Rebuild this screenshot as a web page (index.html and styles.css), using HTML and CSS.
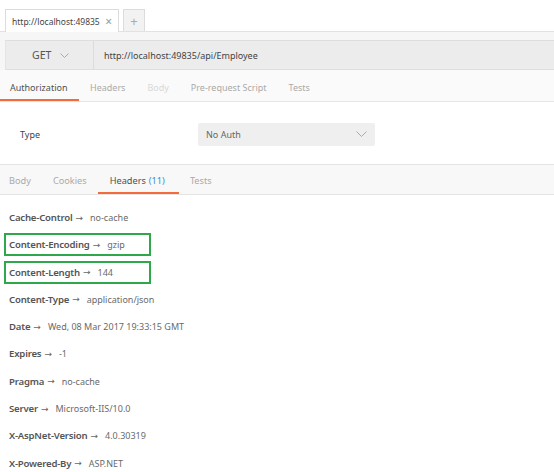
FILE: index.html
```html
<!DOCTYPE html>
<html>
<head>
<meta charset="utf-8">
<link rel="stylesheet" href="styles.css">
</head>
<body>
<div class="tabbar">
  <div class="tab"><span class="tab-title">http://localhost:49835</span><span class="tab-close">×</span></div>
  <div class="tab-plus">+</div>
</div>
<div class="reqwrap">
  <div class="req">
    <div class="method">GET <svg class="chev" width="9" height="5" viewBox="0 0 9 5"><path d="M0.5 0.5 L4.5 4.5 L8.5 0.5" fill="none" stroke="#aaa" stroke-width="1"/></svg></div>
    <div class="url">http://localhost:49835/api/Employee</div>
  </div>
</div>
<div class="reqtabs">
  <div class="rt active">Authorization</div>
  <div class="rt">Headers</div>
  <div class="rt faint">Body</div>
  <div class="rt">Pre-request Script</div>
  <div class="rt">Tests</div>
</div>
<div class="auth">
  <div class="type-label">Type</div>
  <div class="select">No Auth <svg class="chev" width="11" height="6" viewBox="0 0 11 6"><path d="M0.5 0.5 L5.5 5.5 L10.5 0.5" fill="none" stroke="#aaa" stroke-width="1"/></svg></div>
</div>
<div class="restabs">
  <div class="rs">Body</div>
  <div class="rs">Cookies</div>
  <div class="rs active">Headers <span class="count">(11)</span></div>
  <div class="rs">Tests</div>
</div>
<div class="headers">
  <div class="hrow"><b>Cache-Control</b><i>→</i><span>no-cache</span></div>
  <div class="hrow boxed"><b>Content-Encoding</b><i>→</i><span>gzip</span></div>
  <div class="hrow boxed"><b>Content-Length</b><i>→</i><span>144</span></div>
  <div class="hrow"><b>Content-Type</b><i>→</i><span>application/json</span></div>
  <div class="hrow"><b>Date</b><i>→</i><span>Wed, 08 Mar 2017 19:33:15 GMT</span></div>
  <div class="hrow"><b>Expires</b><i>→</i><span>-1</span></div>
  <div class="hrow"><b>Pragma</b><i>→</i><span>no-cache</span></div>
  <div class="hrow"><b>Server</b><i>→</i><span>Microsoft-IIS/10.0</span></div>
  <div class="hrow"><b>X-AspNet-Version</b><i>→</i><span>4.0.30319</span></div>
  <div class="hrow"><b>X-Powered-By</b><i>→</i><span>ASP.NET</span></div>
</div>
</body>
</html>
```
FILE: styles.css
```css
html, body {
  margin: 0;
  padding: 0;
  background: #fff;
}
body {
  width: 554px;
  height: 472px;
  overflow: hidden;
  font-family: "Noto Sans", "Open Sans", sans-serif;
  font-size: 10px;
  color: #505050;
}
.tabbar {
  height: 31px;
  display: flex;
  align-items: flex-end;
  padding-left: 5px;
  box-sizing: border-box;
}
.tab {
  width: 114px;
  height: 23px;
  box-sizing: border-box;
  border: 1px solid #dcdcdc;
  border-bottom: none;
  background: #fff;
  display: flex;
  align-items: center;
  padding: 0 6px 0 6px;
  position: relative;
  top: 1px;
}
.tab-title {
  flex: 1;
  overflow: hidden;
  white-space: nowrap;
  font-size: 8.5px;
  color: #444;
}
.tab-close {
  color: #999;
  font-size: 12px;
  margin-left: 4px;
}
.tab-plus {
  width: 22px;
  height: 22px;
  box-sizing: border-box;
  margin-left: 4px;
  border: 1px solid #dcdcdc;
  border-bottom: none;
  background: #f2f2f2;
  color: #aaa;
  display: flex;
  align-items: center;
  justify-content: center;
  font-size: 13px;
}
.reqwrap {
  background: #f6f6f6;
  border-top: 1px solid #e2e2e2;
  padding: 8px 0 0 5px;
}
.req {
  height: 30px;
  box-sizing: border-box;
  background: #ececec;
  border-top: 1px solid #dedede;
  border-bottom: 1px solid #dedede;
  border-left: 1px solid #e4e4e4;
  display: flex;
  align-items: center;
}
.method {
  width: 88px;
  height: 100%;
  box-sizing: border-box;
  border-right: 1px solid #dcdcdc;
  display: flex;
  align-items: center;
  padding-left: 26px;
  font-size: 10.5px;
  color: #555;
}
.method .chev {
  margin-left: 9px;
}
.url {
  padding-left: 10px;
  font-size: 9px;
  color: #444;
}
.reqtabs {
  height: 32px;
  box-sizing: border-box;
  background: #fafafa;
  border-bottom: 1px solid #e6e6e6;
  display: flex;
  align-items: stretch;
}
.rt {
  display: flex;
  align-items: center;
  padding: 5px 11px 0 11px;
  color: #aaa;
  font-size: 9px;
  border-bottom: 2px solid transparent;
}
.rt.active {
  color: #505050;
  border-bottom-color: #f26b3a;
  width: 79px;
  padding-left: 10px;
  box-sizing: border-box;
}
.rt.faint {
  color: #d8d8d8;
}
.auth {
  height: 62px;
  display: flex;
  align-items: center;
  padding-left: 20px;
  box-sizing: border-box;
  padding-top: 2px;
}
.type-label {
  width: 178px;
  font-size: 9px;
  color: #444;
}
.select {
  width: 177px;
  height: 23px;
  box-sizing: border-box;
  background: #efefef;
  border-radius: 2px;
  display: flex;
  align-items: center;
  justify-content: space-between;
  padding: 0 8px 0 8px;
  color: #666;
  font-size: 9px;
}
.restabs {
  height: 31px;
  box-sizing: border-box;
  background: #f8f8f8;
  border-top: 1px solid #e4e4e4;
  border-bottom: 1px solid #e4e4e4;
  display: flex;
  align-items: stretch;
}
.rs {
  display: flex;
  align-items: center;
  padding: 3px 11px 0 11px;
  color: #aaa;
  font-size: 9.2px;
  border-bottom: 2px solid transparent;
}
.rs:first-child {
  padding-left: 9px;
}
.rs.active {
  color: #505050;
  border-bottom-color: #f26b3a;
  padding: 3px 14px 0 12px;
}
.count {
  color: #3a8fd6;
  margin-left: 3px;
}
.headers {
  padding: 11px 0 0 4px;
  display: flex;
  flex-direction: column;
  gap: 4.3px;
}
.hrow {
  width: 147px;
  height: 23px;
  box-sizing: border-box;
  border: 2px solid transparent;
  display: flex;
  align-items: center;
  padding-left: 3px;
  white-space: nowrap;
  font-size: 9px;
  color: #6a6a6a;
}
.hrow b {
  font-size: 9.6px;
  letter-spacing: -0.2px;
  font-weight: 600;
  color: #555;
}
.hrow i {
  font-style: normal;
  font-family: "DejaVu Sans", sans-serif;
  font-size: 9px;
  color: #666;
  margin: 0 7px 0 3px;
}
.hrow.boxed {
  border-color: #2ea84a;
}
```
